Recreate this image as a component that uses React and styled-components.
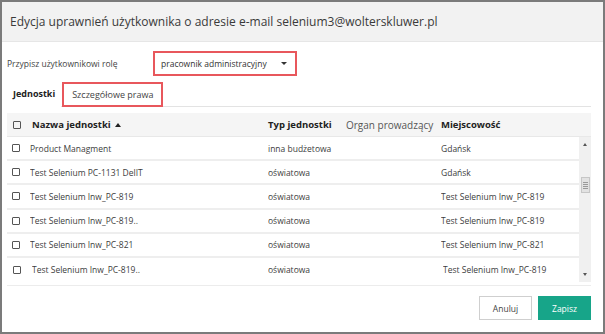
import styled, { createGlobalStyle } from "styled-components";

const Global = createGlobalStyle`
  html, body {
    margin: 0;
    padding: 0;
    background: #fff;
  }
  * {
    box-sizing: border-box;
  }
`;

const Frame = styled.div`
  width: 605px;
  height: 334px;
  border: 2px solid #7b7b7b;
  font-family: "Open Sans", "Liberation Sans", sans-serif;
  color: #333;
  display: flex;
  flex-direction: column;
  overflow: hidden;
`;

const Header = styled.div`
  height: 40px;
  background: #f2f2f2;
  border-bottom: 1px solid #e6e6e6;
  display: flex;
  align-items: center;
  padding-left: 8px;
  font-size: 12px;
  color: #3a3a3a;
`;

const Body = styled.div`
  flex: 1;
  padding: 0 12px 0 3px;
  display: flex;
  flex-direction: column;
`;

const RoleRow = styled.div`
  display: flex;
  align-items: center;
  margin-top: 9px;
  height: 25px;
  padding-left: 2px;
`;

const Label = styled.span`
  font-size: 8.5px;
  color: #444;
  width: 146px;
`;

const Select = styled.div`
  width: 144px;
  height: 25px;
  border: 2px solid #e8575c;
  display: flex;
  align-items: center;
  justify-content: space-between;
  padding: 0 8px 0 6px;
  font-size: 8.5px;
  color: #333;
`;

const Caret = styled.span`
  width: 0;
  height: 0;
  border-left: 3px solid transparent;
  border-right: 3px solid transparent;
  border-top: 3px solid #333;
`;

const Tabs = styled.div`
  display: flex;
  align-items: flex-end;
  gap: 1px;
  height: 25px;
  margin-top: 6px;
  margin-left: 2px;
  border-bottom: 1px solid #e3e3e3;
`;

const Tab = styled.div`
  height: ${({ $boxed }) => ($boxed ? "25px" : "24px")};
  display: flex;
  align-items: center;
  padding: ${({ $boxed }) => ($boxed ? "0 8px" : "0 6px 4px 6px")};
  font-size: 9px;
  font-weight: ${({ $active }) => ($active ? 700 : 400)};
  color: ${({ $active }) => ($active ? "#222" : "#444")};
  border: ${({ $boxed }) => ($boxed ? "2px solid #e8575c" : "none")};
  margin-bottom: -1px;
  background: #fff;
`;

const Table = styled.div`
  margin-top: 6px;
  margin-left: 2px;
  display: flex;
  flex-direction: column;
`;

const HeadRow = styled.div`
  display: grid;
  grid-template-columns: 25px 236px 78px 95px 1fr;
  align-items: center;
  height: 24px;
  background: #f5f5f5;
  border-bottom: 1px solid #e8e8e8;
  font-size: 9.5px;
`;

const HeadCell = styled.div`
  font-weight: ${({ $muted }) => ($muted ? 400 : 700)};
  font-size: ${({ $muted }) => ($muted ? "10px" : "9.5px")};
  color: ${({ $muted }) => ($muted ? "#555" : "#222")};
  white-space: nowrap;
  display: flex;
  align-items: center;
  gap: 4px;
`;

const SortUp = styled.span`
  width: 0;
  height: 0;
  border-left: 3.5px solid transparent;
  border-right: 3.5px solid transparent;
  border-bottom: 4px solid #222;
`;

const BodyWrap = styled.div`
  display: flex;
  height: 145px;
`;

const Rows = styled.div`
  flex: 1;
  display: flex;
  flex-direction: column;
`;

const Row = styled.div`
  display: grid;
  grid-template-columns: ${({ $shift }) =>
    $shift ? "25px 236px 79px 96px 1fr" : "23px 238px 78px 95px 1fr"};
  align-items: center;
  height: 24.4px;
  border-bottom: ${({ $last }) => ($last ? "none" : "2px solid #eeeeee")};
  font-size: 8.5px;
  color: #3d3d3d;
`;

const Cell = styled.div`
  white-space: nowrap;
  overflow: hidden;
`;

const Check = styled.span`
  display: block;
  width: 8px;
  height: 8px;
  border: 1px solid #555;
  border-radius: 1px;
  margin-left: ${({ $shift }) => ($shift ? "6px" : "5px")};
`;

const Scrollbar = styled.div`
  width: 12px;
  background: #f0f0f0;
  display: flex;
  flex-direction: column;
  align-items: center;
`;

const ArrowUp = styled.span`
  margin-top: 6px;
  width: 0;
  height: 0;
  border-left: 2px solid transparent;
  border-right: 2px solid transparent;
  border-bottom: 3px solid #555;
`;

const Thumb = styled.div`
  margin-top: 31px;
  width: 9px;
  height: 16px;
  background: #e2e2e2;
  border: 1px solid #c6c6c6;
  display: flex;
  flex-direction: column;
  justify-content: center;
  gap: 1px;
  padding: 0 1px;
  & > span {
    display: block;
    height: 1px;
    background: #999;
  }
`;

const ArrowDown = styled.span`
  margin-top: auto;
  margin-bottom: 6px;
  width: 0;
  height: 0;
  border-left: 2px solid transparent;
  border-right: 2px solid transparent;
  border-top: 3px solid #555;
`;

const Footer = styled.div`
  margin-top: 3px;
  margin-left: 2px;
  border-top: 1px solid #ececec;
  display: flex;
  justify-content: flex-end;
  gap: 6px;
  padding-top: 10px;
`;

const Button = styled.button`
  width: 53px;
  height: 24px;
  font-family: "Open Sans", "Liberation Sans", sans-serif;
  font-size: 8.5px;
  border: 1px solid ${({ $primary }) => ($primary ? "#17a589" : "#cfcfcf")};
  background: ${({ $primary }) => ($primary ? "#17a589" : "#fff")};
  color: ${({ $primary }) => ($primary ? "#fff" : "#444")};
  padding: 0;
  border-radius: 0;
`;

const rows = [
  { name: "Product Managment", type: "inna budżetowa", city: "Gdańsk" },
  { name: "Test Selenium PC-1131 DelIT", type: "oświatowa", city: "Gdańsk" },
  { name: "Test Selenium Inw_PC-819", type: "oświatowa", city: "Test Selenium Inw_PC-819" },
  { name: "Test Selenium Inw_PC-819..", type: "oświatowa", city: "Test Selenium Inw_PC-819" },
  { name: "Test Selenium Inw_PC-821", type: "oświatowa", city: "Test Selenium Inw_PC-821" },
  { name: "Test Selenium Inw_PC-819..", type: "oświatowa", city: "Test Selenium Inw_PC-819", shift: true },
];

export default function App() {
  return (
    <>
      <Global />
      <Frame>
        <Header>Edycja uprawnień użytkownika o adresie e-mail selenium3@wolterskluwer.pl</Header>
        <Body>
          <RoleRow>
            <Label>Przypisz użytkownikowi rolę</Label>
            <Select>
              pracownik administracyjny
              <Caret />
            </Select>
          </RoleRow>
          <Tabs>
            <Tab $active>Jednostki</Tab>
            <Tab $boxed>Szczegółowe prawa</Tab>
          </Tabs>
          <Table>
            <HeadRow>
              <Check $shift />
              <HeadCell>
                Nazwa jednostki <SortUp />
              </HeadCell>
              <HeadCell>Typ jednostki</HeadCell>
              <HeadCell $muted>Organ prowadzący</HeadCell>
              <HeadCell>Miejscowość</HeadCell>
            </HeadRow>
            <BodyWrap>
              <Rows>
                {rows.map((r, i) => (
                  <Row key={i} $shift={r.shift} $last={i === rows.length - 1}>
                    <Check $shift={r.shift} />
                    <Cell>{r.name}</Cell>
                    <Cell>{r.type}</Cell>
                    <Cell />
                    <Cell>{r.city}</Cell>
                  </Row>
                ))}
              </Rows>
              <Scrollbar>
                <ArrowUp />
                <Thumb>
                  <span />
                  <span />
                  <span />
                  <span />
                </Thumb>
                <ArrowDown />
              </Scrollbar>
            </BodyWrap>
          </Table>
          <Footer>
            <Button>Anuluj</Button>
            <Button $primary>Zapisz</Button>
          </Footer>
        </Body>
      </Frame>
    </>
  );
}
